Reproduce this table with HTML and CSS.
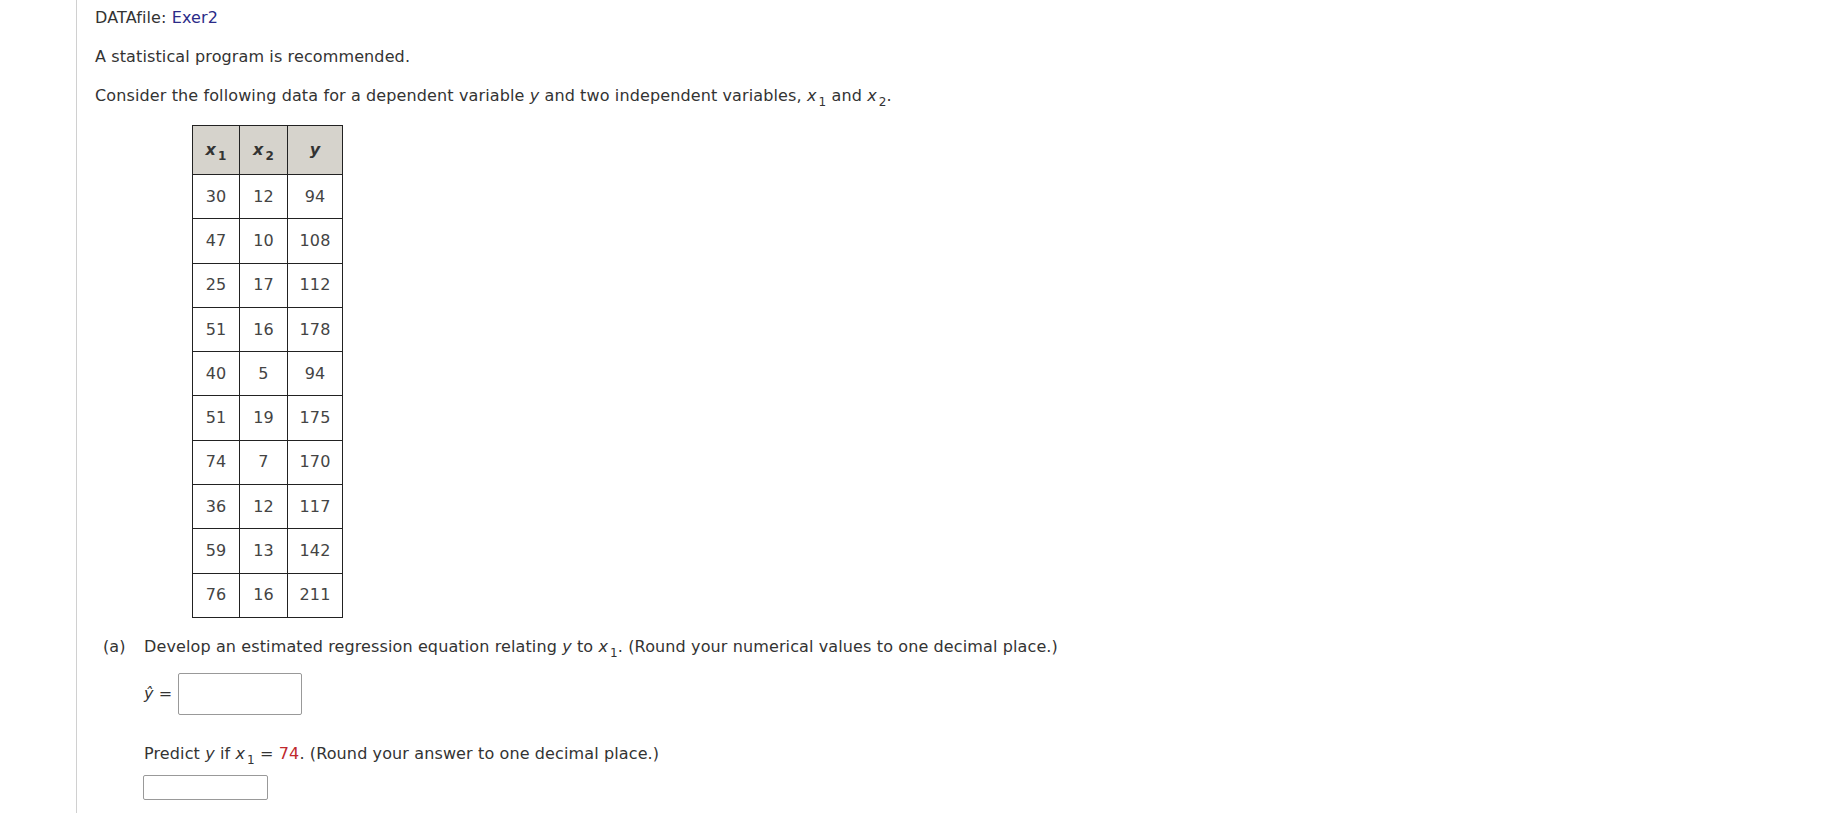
FILE: index.html
```html
<!DOCTYPE html>
<html>
<head>
<meta charset="utf-8">
<link rel="stylesheet" href="styles.css">
</head>
<body>
<div class="page">
  <p class="line first">DATAfile: <span class="link">Exer2</span></p>
  <p class="line">A statistical program is recommended.</p>
  <p class="line">Consider the following data for a dependent variable <i>y</i> and two independent variables, <i>x</i><sub>1</sub> and <i>x</i><sub>2</sub>.</p>
  <table class="data">
    <thead>
      <tr><th class="c1"><i>x</i><sub>1</sub></th><th class="c2"><i>x</i><sub>2</sub></th><th class="c3"><i>y</i></th></tr>
    </thead>
    <tbody>
      <tr><td>30</td><td>12</td><td>94</td></tr>
      <tr><td>47</td><td>10</td><td>108</td></tr>
      <tr><td>25</td><td>17</td><td>112</td></tr>
      <tr><td>51</td><td>16</td><td>178</td></tr>
      <tr><td>40</td><td>5</td><td>94</td></tr>
      <tr><td>51</td><td>19</td><td>175</td></tr>
      <tr><td>74</td><td>7</td><td>170</td></tr>
      <tr><td>36</td><td>12</td><td>117</td></tr>
      <tr><td>59</td><td>13</td><td>142</td></tr>
      <tr><td>76</td><td>16</td><td>211</td></tr>
    </tbody>
  </table>
  <div class="part">
    <div class="part-label">(a)</div>
    <div class="part-body">
      <p class="line">Develop an estimated regression equation relating <i>y</i> to <i>x</i><sub>1</sub>. (Round your numerical values to one decimal place.)</p>
      <div class="eq-row">
        <span class="yhat"><i>ŷ</i> =</span>
        <span class="box big"></span>
      </div>
      <p class="line predict">Predict <i>y</i> if <i>x</i><sub>1</sub> = <span class="red">74</span>. (Round your answer to one decimal place.)</p>
      <span class="box small"></span>
    </div>
  </div>
</div>
</body>
</html>
```
FILE: styles.css
```css
html, body {
  margin: 0;
  padding: 0;
  background: #fff;
}
body {
  font-family: "DejaVu Sans", Verdana, sans-serif;
  font-size: 16px;
  letter-spacing: 0.12px;
  color: #333;
}
.page {
  margin-left: 76px;
  border-left: 1px solid #d0d0d0;
  padding-left: 18px;
  padding-top: 8px;
  min-height: 813px;
  box-sizing: border-box;
}
.line {
  margin: 0 0 19px 0;
  line-height: 20px;
}
.link {
  color: #2b2b88;
}
.red {
  color: #c0282d;
}
sub {
  font-size: 12px;
  line-height: 0;
  vertical-align: -5px;
  margin-left: 2px;
}
.data {
  border-collapse: collapse;
  margin-left: 97px;
  margin-top: 0;
  color: #444;
}
.data th, .data td {
  border: 1px solid #222;
  padding: 0;
  text-align: center;
  line-height: 20px;
}
.data th {
  background: #d6d3cc;
  height: 48px;
  font-weight: bold;
  color: #333;
}
.data td {
  height: 43.3px;
}
.c1 { width: 46px; }
.c2 { width: 47px; }
.c3 { width: 54px; }
.part {
  display: flex;
  margin-top: 19px;
  padding-left: 8px;
}
.part-label {
  width: 41px;
  line-height: 20px;
}
.part-body {
  display: flex;
  flex-direction: column;
  align-items: flex-start;
}
.part-body .line {
  margin-bottom: 0;
}
.eq-row {
  display: flex;
  align-items: center;
  gap: 6px;
  margin-top: 16px;
}
.yhat {
  font-size: 16px;
}
.box {
  display: block;
  border: 1px solid #999;
  border-radius: 2px;
  background: #fff;
}
.box.big {
  width: 122px;
  height: 40px;
}
.predict {
  margin-top: 29px;
}
.box.small {
  width: 123px;
  height: 23px;
  margin-top: 11px;
  margin-left: -1px;
}
```
